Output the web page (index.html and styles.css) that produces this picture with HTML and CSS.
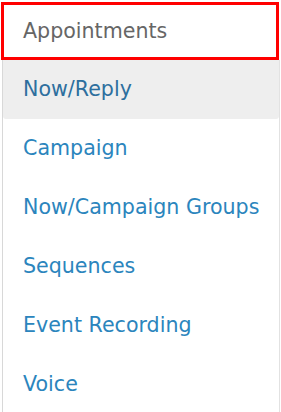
FILE: index.html
```html
<!DOCTYPE html>
<html>
	<head>
		<meta charset="UTF-8">
		<title>Menu</title>
		<link rel="stylesheet" href="styles.css">
	</head>
	<body>
		<div class="side_menu">
			<div class="m_current">Appointments</div>
			<ul class="m_list">
				<li class="m_active"><a href="#">Now/Reply</a></li>
				<li><a href="#">Campaign</a></li>
				<li><a href="#">Now/Campaign Groups</a></li>
				<li><a href="#">Sequences</a></li>
				<li><a href="#">Event Recording</a></li>
				<li><a href="#">Voice</a></li>
			</ul>
		</div>
	</body>
</html>
```
FILE: styles.css
```css
*{
	margin: 0;
	padding: 0;
	list-style: none;
}

body {
	font-family: "DejaVu Sans", Verdana, sans-serif;
	font-size: 20.6px;
	background-color: #fff;
}

.side_menu {
	width: 281px;
	height: 412px;
	overflow: hidden;
}

.side_menu .m_current {
	margin: 2px 2px 0 1px;
	height: 52px;
	line-height: 52px;
	padding-left: 19px;
	border: 3px solid #ff0000;
	color: #666;
}

.side_menu .m_list {
	width: 276px;
	margin-left: 2px;
	border-left: 1px solid #d8d8d8;
	border-right: 1px solid #e2e2e2;
}

.m_list li {
	height: 59px;
	line-height: 59px;
	padding-left: 20px;
}

.m_list li a {
	color: #2b85bd;
	text-decoration: none;
}

.m_list .m_active {
	background-color: #eeeeee;
	border-radius: 0 0 3px 3px;
}

.m_list .m_active a {
	color: #2d6f9e;
}
```
